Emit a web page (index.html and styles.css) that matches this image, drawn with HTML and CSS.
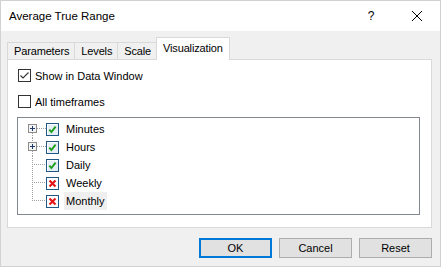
FILE: index.html
```html
<!DOCTYPE html>
<html>
<head>
  <meta charset="utf-8" />
  <title>Average True Range</title>
  <link rel="stylesheet" href="styles.css">
</head>
<body>
  <div class="window">
    <div class="titlebar">
      <span class="title">Average True Range</span>
      <span class="caption-btn">?</span>
      <span class="caption-btn">
        <svg width="10" height="10" viewBox="0 0 10 10"><path d="M0 0 L10 10 M10 0 L0 10" stroke="#000" stroke-width="1" fill="none"/></svg>
      </span>
    </div>

    <div class="content">
      <div class="tabs">
        <div class="tab">Parameters</div>
        <div class="tab">Levels</div>
        <div class="tab">Scale</div>
        <div class="tab active">Visualization</div>
      </div>

      <div class="panel">
        <div class="check-group">
          <label class="check-row">
            <span class="checkbox checked">
              <svg width="11" height="11" viewBox="0 0 11 11"><path d="M1.5 5.5 L4 8 L9.5 2.5" stroke="#333" stroke-width="1.1" fill="none"/></svg>
            </span>
            Show in Data Window
          </label>
          <label class="check-row">
            <span class="checkbox"></span>
            All timeframes
          </label>
        </div>

        <div class="tree">
          <div class="tree-row">
            <svg class="tree-lines" width="28" height="18" viewBox="0 0 28 18">
              <path d="M14.5 13 V18" stroke="#a0a0a0" stroke-dasharray="1 1"/>
              <path d="M19 8.5 H28" stroke="#a0a0a0" stroke-dasharray="1 1"/>
              <rect x="10.5" y="4.5" width="8" height="8" fill="#f4f4f4" stroke="#8c8c8c"/>
              <path d="M12 8.5 H17 M14.5 6 V11" stroke="#1e3a6a"/>
            </svg>
            <svg class="state" width="13" height="13" viewBox="0 0 13 13">
              <rect x="0.5" y="0.5" width="12" height="12" fill="#fff" stroke="#1d5886"/>
              <rect x="1.5" y="1.5" width="10" height="10" fill="#e6eef5"/>
              <path d="M3.3 6.6 L5.4 9 L9.6 3.6" stroke="#1f9f1f" stroke-width="2" fill="none"/>
            </svg>
            <span class="tree-label">Minutes</span>
          </div>
          <div class="tree-row">
            <svg class="tree-lines" width="28" height="18" viewBox="0 0 28 18">
              <path d="M14.5 0 V4 M14.5 13 V18" stroke="#a0a0a0" stroke-dasharray="1 1"/>
              <path d="M19 8.5 H28" stroke="#a0a0a0" stroke-dasharray="1 1"/>
              <rect x="10.5" y="4.5" width="8" height="8" fill="#f4f4f4" stroke="#8c8c8c"/>
              <path d="M12 8.5 H17 M14.5 6 V11" stroke="#1e3a6a"/>
            </svg>
            <svg class="state" width="13" height="13" viewBox="0 0 13 13">
              <rect x="0.5" y="0.5" width="12" height="12" fill="#fff" stroke="#1d5886"/>
              <rect x="1.5" y="1.5" width="10" height="10" fill="#e6eef5"/>
              <path d="M3.3 6.6 L5.4 9 L9.6 3.6" stroke="#1f9f1f" stroke-width="2" fill="none"/>
            </svg>
            <span class="tree-label">Hours</span>
          </div>
          <div class="tree-row">
            <svg class="tree-lines" width="28" height="18" viewBox="0 0 28 18">
              <path d="M14.5 0 V18" stroke="#a0a0a0" stroke-dasharray="1 1"/>
              <path d="M16 8.5 H28" stroke="#a0a0a0" stroke-dasharray="1 1"/>
            </svg>
            <svg class="state" width="13" height="13" viewBox="0 0 13 13">
              <rect x="0.5" y="0.5" width="12" height="12" fill="#fff" stroke="#1d5886"/>
              <rect x="1.5" y="1.5" width="10" height="10" fill="#e6eef5"/>
              <path d="M3.3 6.6 L5.4 9 L9.6 3.6" stroke="#1f9f1f" stroke-width="2" fill="none"/>
            </svg>
            <span class="tree-label">Daily</span>
          </div>
          <div class="tree-row">
            <svg class="tree-lines" width="28" height="18" viewBox="0 0 28 18">
              <path d="M14.5 0 V18" stroke="#a0a0a0" stroke-dasharray="1 1"/>
              <path d="M16 8.5 H28" stroke="#a0a0a0" stroke-dasharray="1 1"/>
            </svg>
            <svg class="state" width="13" height="13" viewBox="0 0 13 13">
              <rect x="0.5" y="0.5" width="12" height="12" fill="#fff" stroke="#1d5886"/>
              <path d="M3.5 3.5 L9.5 9.5 M9.5 3.5 L3.5 9.5" stroke="#e41818" stroke-width="2.2" fill="none"/>
            </svg>
            <span class="tree-label">Weekly</span>
          </div>
          <div class="tree-row">
            <svg class="tree-lines" width="28" height="18" viewBox="0 0 28 18">
              <path d="M14.5 0 V9" stroke="#a0a0a0" stroke-dasharray="1 1"/>
              <path d="M16 8.5 H28" stroke="#a0a0a0" stroke-dasharray="1 1"/>
            </svg>
            <svg class="state" width="13" height="13" viewBox="0 0 13 13">
              <rect x="0.5" y="0.5" width="12" height="12" fill="#fff" stroke="#1d5886"/>
              <path d="M3.5 3.5 L9.5 9.5 M9.5 3.5 L3.5 9.5" stroke="#e41818" stroke-width="2.2" fill="none"/>
            </svg>
            <span class="tree-label selected">Monthly</span>
          </div>
        </div>
      </div>

      <div class="buttons">
        <button class="btn default">OK</button>
        <button class="btn">Cancel</button>
        <button class="btn">Reset</button>
      </div>
    </div>
  </div>
</body>
</html>
```

FILE: styles.css
```css
/* --- Base --- */
*, *::before, *::after {
  box-sizing: border-box;
}
body {
  margin: 0;
  font-family: "Liberation Sans", Arial, sans-serif;
  font-size: 11px;
  color: #000;
  background: #f0f0f0;
}

/* --- Window frame --- */
.window {
  width: 441px;
  height: 267px;
  border: 1px solid #d2d2d2;
  background: #f0f0f0;
}
.titlebar {
  display: flex;
  height: 30px;
  background: #fff;
}
.title {
  flex: 1;
  padding-left: 8px;
  font-size: 11.5px;
  line-height: 30px;
}
.caption-btn {
  width: 46px;
  display: flex;
  align-items: center;
  justify-content: center;
  font-size: 12px;
}

/* --- Content --- */
.content {
  padding: 6px 8px 0 6px;
}
.tabs {
  display: flex;
  align-items: flex-end;
  height: 22px;
  letter-spacing: -0.15px;
}
.tab {
  height: 17px;
  line-height: 16px;
  padding: 0 5px 0 6px;
  border: 1px solid #d9d9d9;
  border-bottom: none;
  margin-left: -1px;
  background: #f0f0f0;
}
.tab:first-child {
  margin-left: 0;
}
.tab.active {
  height: 23px;
  line-height: 20px;
  padding: 0 6px 0 6px;
  margin-bottom: -1px;
  background: #fff;
  position: relative;
  z-index: 1;
}
.panel {
  height: 169px;
  background: #fff;
  border: 1px solid #d9d9d9;
  padding: 9px 11px 0 9px;
}

/* --- Check boxes --- */
.check-group {
  display: flex;
  flex-direction: column;
  gap: 13px;
  margin-bottom: 9px;
}
.check-row {
  display: flex;
  align-items: center;
  gap: 4px;
  height: 13px;
  margin-left: 1px;
}
.checkbox {
  width: 13px;
  height: 13px;
  border: 1px solid #333;
  background: #fff;
  display: flex;
}

/* --- Tree --- */
.tree {
  height: 98px;
  border: 1px solid #828790;
  padding-top: 2px;
}
.tree-row {
  display: flex;
  align-items: center;
  height: 18px;
}
.tree-lines {
  display: block;
  shape-rendering: crispEdges;
}
.state {
  display: block;
  margin-top: 1px;
  shape-rendering: crispEdges;
}
.state path {
  shape-rendering: geometricPrecision;
}
.tree-label {
  margin-left: 5px;
  padding: 0 2px;
  line-height: 18px;
}
.tree-label.selected {
  background: #efefef;
}

/* --- Buttons --- */
.buttons {
  display: flex;
  justify-content: flex-end;
  gap: 7px;
  margin-top: 10px;
}
.btn {
  width: 73px;
  height: 20px;
  padding: 0;
  font-family: "Liberation Sans", Arial, sans-serif;
  font-size: 11px;
  color: #000;
  background: #e1e1e1;
  border: 1px solid #adadad;
}
.btn.default {
  border: 2px solid #0078d7;
}
```
